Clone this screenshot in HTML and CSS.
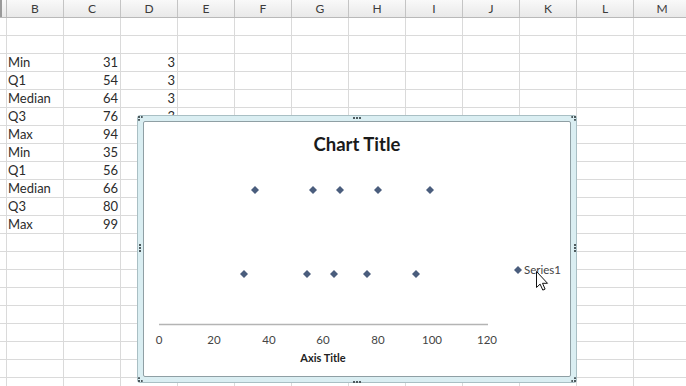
FILE: index.html
```html
<!DOCTYPE html>
<html lang="en">
<head>
    <meta charset="UTF-8">
    <title>Sheet1 - Chart</title>
    <link rel="stylesheet" href="styles.css">
</head>
<body>
    <div class="sheet">
        <div class="col-headers">
            <div class="corner"></div>
            <div class="col-head">B</div>
            <div class="col-head">C</div>
            <div class="col-head">D</div>
            <div class="col-head">E</div>
            <div class="col-head">F</div>
            <div class="col-head">G</div>
            <div class="col-head">H</div>
            <div class="col-head">I</div>
            <div class="col-head">J</div>
            <div class="col-head">K</div>
            <div class="col-head">L</div>
            <div class="col-head">M</div>
        </div>

        <div class="cells">
            <div class="data">
                <span></span><span class="lbl">Min</span><span class="num">31</span><span class="num">3</span>
                <span></span><span class="lbl">Q1</span><span class="num">54</span><span class="num">3</span>
                <span></span><span class="lbl">Median</span><span class="num">64</span><span class="num">3</span>
                <span></span><span class="lbl">Q3</span><span class="num">76</span><span class="num">3</span>
                <span></span><span class="lbl">Max</span><span class="num">94</span><span class="num">3</span>
                <span></span><span class="lbl">Min</span><span class="num">35</span><span class="num">8</span>
                <span></span><span class="lbl">Q1</span><span class="num">56</span><span class="num">8</span>
                <span></span><span class="lbl">Median</span><span class="num">66</span><span class="num">8</span>
                <span></span><span class="lbl">Q3</span><span class="num">80</span><span class="num">8</span>
                <span></span><span class="lbl">Max</span><span class="num">99</span><span class="num">8</span>
            </div>
        </div>

        <!-- chart object, selected -->
        <div class="chart-frame">
            <div class="chart-area">
                <svg class="plot" viewBox="0 0 427 256" width="427" height="256">
                    <text class="chart-title" x="213" y="29" text-anchor="middle">Chart Title</text>

                    <g class="markers">
                        <!-- x: 15 + v * 2.742 -->
                        <path d="M111 64 l4 4 l-4 4 l-4 -4 z"/>
                        <path d="M169 64 l4 4 l-4 4 l-4 -4 z"/>
                        <path d="M196 64 l4 4 l-4 4 l-4 -4 z"/>
                        <path d="M234 64 l4 4 l-4 4 l-4 -4 z"/>
                        <path d="M286 64 l4 4 l-4 4 l-4 -4 z"/>

                        <path d="M100 148 l4 4 l-4 4 l-4 -4 z"/>
                        <path d="M163 148 l4 4 l-4 4 l-4 -4 z"/>
                        <path d="M190 148 l4 4 l-4 4 l-4 -4 z"/>
                        <path d="M223 148 l4 4 l-4 4 l-4 -4 z"/>
                        <path d="M272 148 l4 4 l-4 4 l-4 -4 z"/>
                    </g>

                    <line class="axis" x1="15" y1="202.5" x2="344" y2="202.5"/>
                    <g class="tick-labels" text-anchor="middle">
                        <text x="15" y="222">0</text>
                        <text x="70" y="222">20</text>
                        <text x="125" y="222">40</text>
                        <text x="179" y="222">60</text>
                        <text x="234" y="222">80</text>
                        <text x="288" y="222">100</text>
                        <text x="343" y="222">120</text>
                    </g>
                    <text class="axis-title" x="179" y="240" text-anchor="middle">Axis Title</text>

                    <g class="legend">
                        <path class="legend-key" d="M374 144 l4 4 l-4 4 l-4 -4 z"/>
                        <text x="380" y="152">Series1</text>
                    </g>

                    <path class="cursor" d="M392.5 149.5 v16 l3.6 -3.4 l2.7 6 l2.3 -1 l-2.6 -5.8 h5 z"/>
                </svg>
            </div>

            <span class="handle h-top"></span>
            <span class="handle h-bottom"></span>
            <span class="handle h-left"></span>
            <span class="handle h-right"></span>
            <span class="corner-dot c-tl"></span>
            <span class="corner-dot c-tr"></span>
            <span class="corner-dot c-bl"></span>
            <span class="corner-dot c-br"></span>
        </div>
    </div>
</body>
</html>
```

FILE: styles.css
```css
* {
    margin: 0;
    padding: 0;
    box-sizing: border-box;
}
body {
    font-family: Lato, "Open Sans", sans-serif;
    background-color: #ffffff;
    color: #2b2b2b;
    overflow: hidden;
}
.sheet {
    position: relative;
    width: 686px;
    height: 386px;
    overflow: hidden;
}

/* column headers */
.col-headers {
    display: flex;
    height: 18px;
    border-bottom: 1px solid #b9b9b9;
    background: linear-gradient(to bottom, #f9f9f9, #e9e9e9);
}
.corner {
    flex: 0 0 7px;
    border-left: 2px solid #9a9a9a;
    border-right: 1px solid #bdbdbd;
}
.col-head {
    flex: 0 0 57px;
    border-right: 1px solid #c4c4c4;
    text-align: center;
    font-size: 12px;
    line-height: 17px;
    color: #3c3c3c;
}

/* cell grid */
.cells {
    height: 368px;
    background-image:
        linear-gradient(to right, #dadada 1px, transparent 1px),
        linear-gradient(to bottom, transparent 17px, #dadada 17px);
    background-size: 57px 100%, 100% 18px;
    background-position: 6px 0, 0 0;
}
.data {
    display: grid;
    grid-template-columns: 7px 57px 57px 57px;
    grid-auto-rows: 18px;
    padding-top: 36px;
    font-size: 13px;
    line-height: 17px;
}
.lbl {
    padding-left: 1px;
}
.num {
    text-align: right;
    padding-right: 3px;
}

/* chart object */
.chart-frame {
    position: absolute;
    left: 137px;
    top: 115px;
    width: 440px;
    height: 268px;
    border: 1px solid #a9bfc4;
    border-radius: 3px;
    background-color: #daeef2;
    padding: 5px;
}
.chart-area {
    width: 100%;
    height: 100%;
    background-color: #ffffff;
    border: 1px solid #8f9fa4;
    border-radius: 2px;
}
.plot {
    display: block;
}
.chart-title {
    font-family: Lato, sans-serif;
    font-weight: bold;
    font-size: 18.5px;
    fill: #1a1a1a;
}
.markers path,
.legend-key {
    fill: #4a5d7d;
}
.axis {
    stroke: #b4b4b4;
    stroke-width: 1.5;
}
.tick-labels text,
.legend text {
    font-family: Lato, sans-serif;
    font-size: 11.5px;
    fill: #444444;
}
.axis-title {
    font-family: Lato, sans-serif;
    font-weight: bold;
    font-size: 11px;
    fill: #222222;
}
.cursor {
    fill: #ffffff;
    stroke: #111111;
    stroke-width: 1;
}

/* selection handles */
.handle {
    position: absolute;
    width: 8px;
    height: 2px;
    border-top: 2px dotted #4d5a5e;
}
.h-top {
    top: 1px;
    left: 215px;
}
.h-bottom {
    bottom: -1px;
    left: 215px;
}
.h-left,
.h-right {
    width: 2px;
    height: 8px;
    border-top: none;
    border-left: 2px dotted #4d5a5e;
}
.h-left {
    left: 1px;
    top: 128px;
}
.h-right {
    right: 0;
    top: 128px;
}
.corner-dot {
    position: absolute;
    width: 5px;
    height: 5px;
    border-top: 2px dotted #4d5a5e;
    border-left: 2px dotted #4d5a5e;
}
.c-tl { left: 0; top: 0; }
.c-tr { right: 0; top: 0; transform: scaleX(-1); }
.c-bl { left: 0; bottom: 0; transform: scaleY(-1); }
.c-br { right: 0; bottom: 0; transform: scale(-1, -1); }
```
